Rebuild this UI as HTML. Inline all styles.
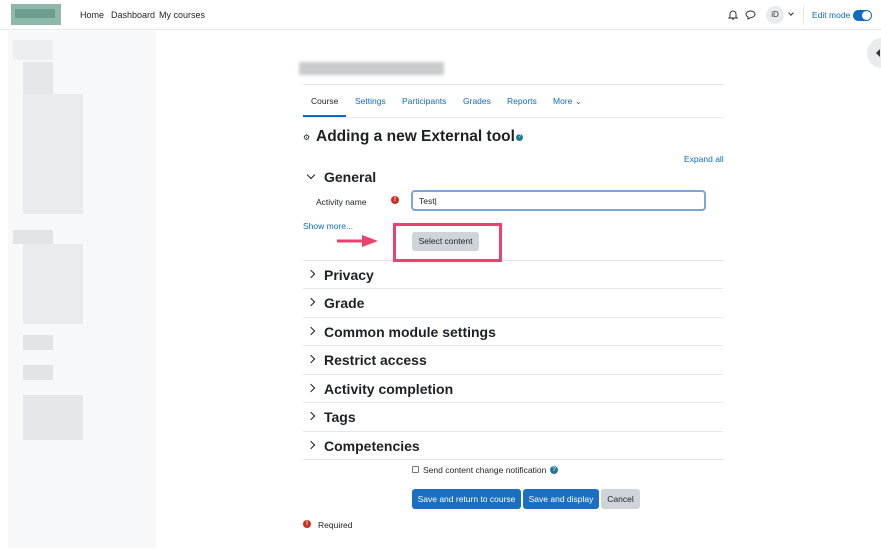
<!DOCTYPE html>
<html><head><style>
*{box-sizing:border-box;margin:0;padding:0}
body{width:881px;height:554px;overflow:hidden;background:#fff;font-family:"Liberation Sans",Arial,sans-serif;color:#1d2125;position:relative}
.a{position:absolute}
.nav{font-size:9px;color:#1d2125}
.blk{position:absolute;background:#e6e7ea}
.sec{position:absolute;left:303px;width:420px;height:28px;border-top:1px solid #e4e6e9}
.sec span{position:absolute;left:21px;top:6px;font-size:14px;font-weight:bold}
.sec i{position:absolute;left:5px;top:10px;width:6px;height:6px;border-right:1.6px solid #1d2125;border-bottom:1.6px solid #1d2125;transform:rotate(-45deg)}
.tab{position:absolute;top:96px;font-size:8.5px;color:#0f6cbf}
.btn{position:absolute;top:489px;height:20px;border-radius:3px;font-size:8.5px;color:#fff;background:#1a6fc0;text-align:center;line-height:20px}
</style></head><body>
<div class="a" style="left:0;top:0;width:881px;height:30px;border-bottom:1px solid #e8e9eb"></div>
<div class="a" style="left:11px;top:4px;width:50px;height:21px;background:#8fb8aa"></div>
<div class="a" style="left:15px;top:9px;width:40px;height:9px;background:#6b9e8e"></div>
<div class="a nav" style="left:80px;top:10px">Home</div>
<div class="a nav" style="left:111px;top:10px">Dashboard</div>
<div class="a nav" style="left:159px;top:10px">My courses</div>
<svg class="a" style="left:728px;top:9px" width="10" height="11" viewBox="0 0 10 11"><path d="M2 8V5a3 3 0 0 1 6 0v3l1 1H1z M4 10h2" fill="none" stroke="#333" stroke-width="1"/></svg>
<svg class="a" style="left:745px;top:9px" width="11" height="11" viewBox="0 0 11 11"><path d="M5.5 2C8 2 10 3.5 10 5.3S8 8.6 5.5 8.6L3 10V8C1.8 7.4 1 6.4 1 5.3 1 3.5 3 2 5.5 2z" fill="none" stroke="#333" stroke-width="1"/></svg>
<div class="a" style="left:766px;top:6px;width:18px;height:18px;border-radius:50%;background:#e9ecef;font-size:8px;text-align:center;line-height:18px;color:#333">iD</div>
<div class="a" style="left:789px;top:11px;width:4px;height:4px;border-right:1.3px solid #333;border-bottom:1.3px solid #333;transform:rotate(45deg)"></div>
<div class="a" style="left:803px;top:5px;width:1px;height:20px;background:#e4e6e9"></div>
<div class="a" style="left:812px;top:10px;font-size:8.5px;color:#0f6cbf">Edit mode</div>
<div class="a" style="left:853px;top:10px;width:19px;height:11px;border-radius:6px;background:#0f6cbf"></div>
<div class="a" style="left:862px;top:11px;width:9px;height:9px;border-radius:50%;background:#fff"></div>
<div class="a" style="left:867px;top:38px;width:30px;height:30px;border-radius:50%;background:#e9ecef"></div>
<div class="a" style="left:876px;top:49px;width:0;height:0;border-top:4px solid transparent;border-bottom:4px solid transparent;border-right:4px solid #333"></div>
<div class="a" style="left:8px;top:31px;width:148px;height:517px;background:#f7f8fa"></div>
<div class="blk" style="left:13px;top:40px;width:40px;height:20px;background:#eceef0"></div>
<div class="blk" style="left:23px;top:62px;width:30px;height:32px"></div>
<div class="blk" style="left:23px;top:94px;width:60px;height:120px;background:#eaebee"></div>
<div class="blk" style="left:13px;top:230px;width:40px;height:14px;background:#e3e4e7"></div>
<div class="blk" style="left:23px;top:244px;width:60px;height:80px;background:#eaebee"></div>
<div class="blk" style="left:23px;top:335px;width:30px;height:15px;background:#e3e4e7"></div>
<div class="blk" style="left:23px;top:365px;width:30px;height:15px;background:#e3e4e7"></div>
<div class="blk" style="left:23px;top:395px;width:60px;height:45px;background:#e6e7ea"></div>
<div class="a" style="left:299px;top:62px;width:145px;height:13px;background:#c9cacc;filter:blur(1.5px)"></div>
<div class="a" style="left:303px;top:84px;width:420px;height:1px;background:#e4e6e9"></div>
<div class="tab" style="left:311px;color:#1d2125">Course</div>
<div class="a" style="left:303px;top:115px;width:43px;height:2px;background:#0f6cbf"></div>
<div class="tab" style="left:355px">Settings</div>
<div class="tab" style="left:402px">Participants</div>
<div class="tab" style="left:463px">Grades</div>
<div class="tab" style="left:507px">Reports</div>
<div class="tab" style="left:553px">More ⌄</div>
<div class="a" style="left:303px;top:117px;width:420px;height:1px;background:#e4e6e9"></div>
<div class="a" style="left:303px;top:133px;font-size:8px">⚙</div>
<div class="a" style="left:316px;top:128px;font-size:15.5px;font-weight:bold">Adding a new External tool</div>
<div class="a" style="left:516px;top:134px;width:7px;height:7px;border-radius:50%;background:#1f7b93;font-size:5px;color:#fff;text-align:center;line-height:7px">?</div>
<div class="a" style="left:684px;top:154px;font-size:8.5px;color:#0f6cbf">Expand all</div>
<div class="a" style="left:308px;top:172px;width:6px;height:6px;border-right:1.6px solid #1d2125;border-bottom:1.6px solid #1d2125;transform:rotate(45deg)"></div>
<div class="a" style="left:324px;top:169px;font-size:14px;font-weight:bold">General</div>
<div class="a" style="left:316px;top:197px;font-size:8.5px">Activity name</div>
<div class="a" style="left:391px;top:196px;width:8px;height:8px;border-radius:50%;background:#ca3120;color:#fff;font-size:6px;font-weight:bold;text-align:center;line-height:8px">!</div>
<div class="a" style="left:411px;top:190px;width:295px;height:21px;border:2px solid #79a6dc;border-radius:4px;font-size:8.5px;padding:4px 0 0 6px">Test|</div>
<div class="a" style="left:303px;top:221px;font-size:8.5px;color:#0f6cbf">Show more...</div>
<svg class="a" style="left:335px;top:233px" width="45" height="16"><path d="M2 8H30" stroke="#e8436e" stroke-width="3"/><path d="M27 2L43 8L27 14Z" fill="#e8436e"/></svg>
<div class="a" style="left:412px;top:232px;width:67px;height:19px;border-radius:3px;background:#ced4da;font-size:8.5px;text-align:center;line-height:19px">Select content</div>
<div class="sec" style="top:260px"><i></i><span>Privacy</span></div>
<div class="sec" style="top:288px"><i></i><span>Grade</span></div>
<div class="sec" style="top:317px"><i></i><span>Common module settings</span></div>
<div class="sec" style="top:345px"><i></i><span>Restrict access</span></div>
<div class="sec" style="top:374px"><i></i><span>Activity completion</span></div>
<div class="sec" style="top:402px"><i></i><span>Tags</span></div>
<div class="sec" style="top:431px"><i></i><span>Competencies</span></div>
<div class="a" style="left:393px;top:223px;width:109px;height:39px;border:3px solid #e8436e"></div>
<div class="a" style="left:303px;top:459px;width:420px;height:1px;background:#e4e6e9"></div>
<div class="a" style="left:412px;top:466px;width:7px;height:7px;border:1px solid #777;border-radius:1px"></div>
<div class="a" style="left:423px;top:465px;font-size:8.5px">Send content change notification</div>
<div class="a" style="left:550px;top:466px;width:8px;height:8px;border-radius:50%;background:#1f7b93;font-size:6px;color:#fff;text-align:center;line-height:8px">?</div>
<div class="btn" style="left:412px;width:109px">Save and return to course</div>
<div class="btn" style="left:523px;width:76px">Save and display</div>
<div class="btn" style="left:601px;width:39px;background:#ced4da;color:#1d2125">Cancel</div>
<div class="a" style="left:303px;top:520px;width:8px;height:8px;border-radius:50%;background:#ca3120;color:#fff;font-size:6px;font-weight:bold;text-align:center;line-height:8px">!</div>
<div class="a" style="left:318px;top:520px;font-size:8.5px">Required</div>
</body></html>
